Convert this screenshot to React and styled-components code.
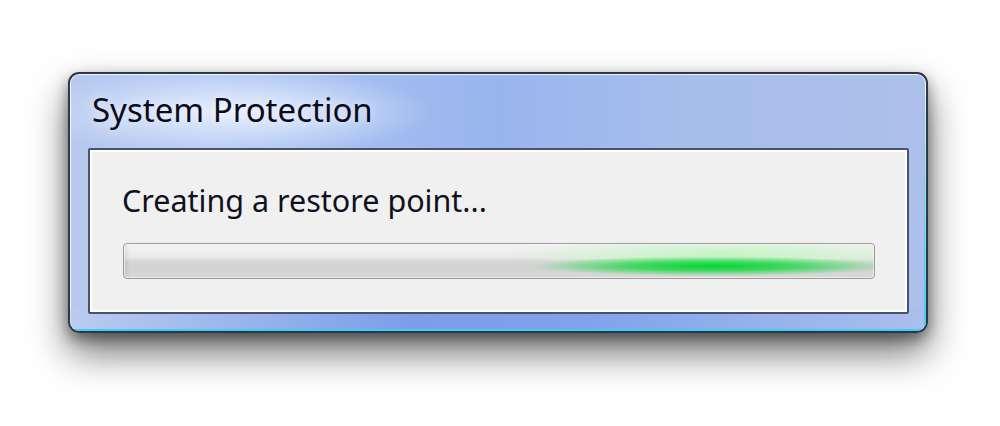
import React from "react";
import styled, { createGlobalStyle } from "styled-components";

const Global = createGlobalStyle`
  html, body { margin: 0; padding: 0; background: #ffffff; }
  body { font-family: "Noto Sans", "Open Sans", sans-serif; }
`;

const Page = styled.div`
  width: 1000px;
  height: 426px;
  padding: 72px 0 0 68px;
  box-sizing: border-box;
  background: #ffffff;
`;

const Window = styled.div`
  width: 860px;
  height: 261px;
  box-sizing: border-box;
  border: 2px solid #2c3748;
  border-radius: 11px;
  background:
    radial-gradient(ellipse 200px 46px at 160px 38px, rgba(232,240,255,0.95) 0%, rgba(215,228,252,0.7) 50%, rgba(200,215,245,0) 100%),
    linear-gradient(to right, #b7c9ef 0%, #a6bff0 30%, #98b5ed 50%, #a6bdec 70%, #adc0eb 100%);
  box-shadow:
    inset 0 0 0 1px rgba(255,255,255,0.85),
    0 20px 38px rgba(0,0,0,0.55),
    0 6px 14px rgba(0,0,0,0.4);
  display: flex;
  flex-direction: column;
  padding: 0 17px 17px 18px;
  position: relative;
  overflow: hidden;
`;

const BottomGlow = styled.div`
  position: absolute;
  left: 0;
  right: 0;
  bottom: 0;
  height: 20px;
  background: linear-gradient(to right, rgba(190,205,240,0.6) 0%, rgba(120,155,232,0.9) 40%, rgba(125,160,235,0.9) 60%, rgba(170,190,238,0.6) 100%);
  border-bottom: 2px solid #3fcdf2;
  pointer-events: none;
`;

const RightEdge = styled.div`
  position: absolute;
  top: 20px;
  right: 0;
  bottom: 0;
  width: 2px;
  background: linear-gradient(to bottom, rgba(63,205,242,0.1), #3fcdf2);
`;

const TitleBar = styled.div`
  height: 74px;
  display: flex;
  align-items: center;
  padding-left: 4px;
  padding-bottom: 2px;
  box-sizing: border-box;
`;

const Title = styled.div`
  font-family: "Noto Sans", "Open Sans", sans-serif;
  font-size: 33px;
  line-height: 40px;
  color: #0b0b1a;
  text-shadow: 0 0 10px rgba(255,255,255,0.8);
`;

const Panel = styled.div`
  flex: 1;
  border: 2px solid #48536b;
  border-radius: 2px;
  background: #f0f0f0;
  box-shadow: inset 0 0 0 2px #ffffff;
  padding: 32px 32px 0 33px;
  display: flex;
  flex-direction: column;
  position: relative;
  z-index: 1;
`;

const Message = styled.div`
  font-family: "Noto Sans", "Open Sans", sans-serif;
  font-size: 30.5px;
  color: #10101e;
  line-height: 36px;
  margin-left: -1px;
`;

const Bar = styled.div`
  margin-top: 25px;
  height: 36px;
  box-sizing: border-box;
  border: 1px solid #9a9a9a;
  border-radius: 4px;
  position: relative;
  overflow: hidden;
  background: linear-gradient(to bottom, #f6f6f6 0%, #e8e8e8 40%, #d6d6d6 50%, #d2d2d2 75%, #dcdcdc 100%);
  box-shadow: inset 0 0 0 1px rgba(255,255,255,0.6), inset 3px 0 4px rgba(0,0,0,0.08);
`;

const Glow = styled.div`
  position: absolute;
  inset: 0;
  background:
    radial-gradient(ellipse 180px 10px at 588px 65%, rgba(0,215,50,1) 0%, rgba(30,215,70,0.8) 45%, rgba(120,225,130,0) 100%),
    radial-gradient(ellipse 220px 15px at 598px 30%, rgba(195,245,195,0.95) 0%, rgba(205,245,205,0.6) 55%, rgba(220,240,220,0) 100%);
`;

export default function App() {
  return (
    <>
      <Global />
      <Page>
        <Window>
          <BottomGlow />
          <RightEdge />
          <TitleBar>
            <Title>System Protection</Title>
          </TitleBar>
          <Panel>
            <Message>Creating a restore point...</Message>
            <Bar>
              <Glow />
            </Bar>
          </Panel>
        </Window>
      </Page>
    </>
  );
}
